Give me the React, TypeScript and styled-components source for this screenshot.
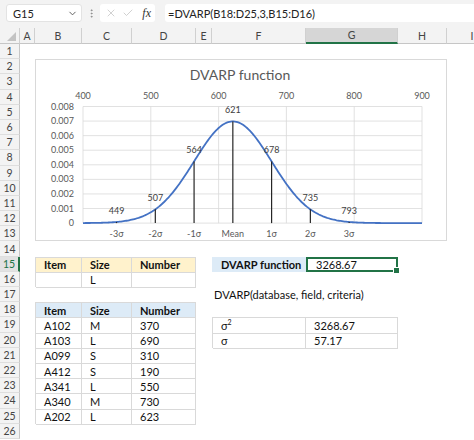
import React from "react";
import styled, { createGlobalStyle } from "styled-components";
import { ChevronDown, EllipsisVertical, X, Check } from "lucide-react";

const GlobalStyle = createGlobalStyle`
  html, body {
    margin: 0;
    padding: 0;
    background: #ffffff;
  }
  body {
    width: 474px;
    height: 440px;
    overflow: hidden;
    font-family: Lato, "Liberation Sans", sans-serif;
    color: #111111;
  }
`;

const ROW_H = 15.2;
const GRID_LINE = "#d9d9d9";

// Formula bar
const TopBar = styled.div`
  display: flex;
  align-items: flex-start;
  height: 28px;
  padding: 4px 0 0 6px;
  box-sizing: border-box;
  background: #f3f3f3;
`;

const NameBox = styled.div`
  display: flex;
  align-items: center;
  justify-content: space-between;
  width: 76px;
  height: 18px;
  box-sizing: border-box;
  padding: 0 3px 0 6px;
  background: #ffffff;
  border: 1px solid #e3e3e3;
  border-radius: 3px;
  font-size: 11px;
  color: #222222;
`;

const Dots = styled.div`
  display: flex;
  align-items: center;
  justify-content: center;
  width: 18px;
  height: 18px;
  color: #8a8a8a;
`;

const FxBox = styled.div`
  display: flex;
  align-items: center;
  gap: 5px;
  width: 55px;
  height: 18px;
  box-sizing: border-box;
  padding: 0 4px 0 5px;
  background: #ffffff;
  border-radius: 3px;
  color: #c2c2c2;
`;

const Fx = styled.span`
  margin-left: auto;
  font-family: "Liberation Serif", serif;
  font-style: italic;
  font-size: 12px;
  color: #333333;
`;

const FormulaInput = styled.div`
  display: flex;
  align-items: center;
  flex: 1;
  height: 18px;
  margin-left: 10px;
  padding-left: 3px;
  background: #ffffff;
  border-radius: 3px 0 0 3px;
  font-size: 11px;
  color: #222222;
`;

// Sheet grid
const Sheet = styled.div`
  display: grid;
  grid-template-columns: 20px 15px 47px 50px 64px 16px 94px 92px 49px 51px;
  grid-template-rows: 16px repeat(26, ${ROW_H}px);
  width: 474px;
  overflow: hidden;
`;

const Corner = styled.div`
  display: flex;
  align-items: flex-end;
  justify-content: flex-end;
  padding: 0 3px 2px 0;
  background: #f3f3f3;
  border-right: 1px solid #d0d0d0;
  border-bottom: 1px solid #c6c6c6;
`;

const ColHeader = styled.div<{ $active?: boolean }>`
  display: flex;
  align-items: center;
  justify-content: center;
  background: ${(p) => (p.$active ? "#d6d6d6" : "#f3f3f3")};
  border-right: 1px solid #d0d0d0;
  border-bottom: ${(p) => (p.$active ? "2px solid #217346" : "1px solid #c6c6c6")};
  font-size: 10.5px;
  color: #444444;
`;

const RowHeader = styled.div<{ $active?: boolean }>`
  display: flex;
  align-items: center;
  justify-content: center;
  box-sizing: border-box;
  background: ${(p) => (p.$active ? "#e2e2e2" : "#f3f3f3")};
  border-right: ${(p) => (p.$active ? "2px solid #217346" : "1px solid #c6c6c6")};
  border-bottom: 1px solid #dedede;
  font-size: 10.5px;
  color: ${(p) => (p.$active ? "#217346" : "#444444")};
`;

const ChartFrame = styled.div`
  grid-column: 3 / 10;
  grid-row: 3 / 15;
  border: 1px solid ${GRID_LINE};
  background: #ffffff;
  overflow: hidden;
`;

const Table = styled.div<{ $col: string; $row: string; $cols: string }>`
  grid-column: ${(p) => p.$col};
  grid-row: ${(p) => p.$row};
  display: grid;
  grid-template-columns: ${(p) => p.$cols};
  grid-auto-rows: ${ROW_H}px;
  border-top: 1px solid ${GRID_LINE};
  border-left: 1px solid ${GRID_LINE};
`;

const Cell = styled.div<{ $fill?: string; $bold?: boolean }>`
  display: flex;
  align-items: center;
  padding-left: 8px;
  background: ${(p) => p.$fill ?? "transparent"};
  border-right: 1px solid ${GRID_LINE};
  border-bottom: 1px solid ${GRID_LINE};
  font-size: 11px;
  font-weight: ${(p) => (p.$bold ? 700 : 400)};
  white-space: nowrap;
`;

const LabelCell = styled.div<{ $col: number; $row: number }>`
  grid-column: ${(p) => p.$col};
  grid-row: ${(p) => p.$row};
  display: flex;
  align-items: center;
  padding-left: 9px;
  background: #ddebf7;
  font-size: 11px;
  font-weight: 700;
`;

const ActiveCell = styled.div<{ $col: number; $row: number }>`
  grid-column: ${(p) => p.$col};
  grid-row: ${(p) => p.$row};
  position: relative;
  display: flex;
  align-items: center;
  padding-left: 8px;
  border: 2px solid #217346;
  font-size: 11px;
`;

const FillHandle = styled.span`
  position: absolute;
  right: -4px;
  bottom: -4px;
  width: 5px;
  height: 5px;
  background: #217346;
  border: 1px solid #ffffff;
`;

const Note = styled.div<{ $col: string; $row: number }>`
  grid-column: ${(p) => p.$col};
  grid-row: ${(p) => p.$row};
  display: flex;
  align-items: center;
  padding-left: 2px;
  font-size: 11px;
  white-space: nowrap;
`;

// Chart geometry (chart content box coordinates)
const MEAN = 621;
const SD = 57.17;
const px = (v: number) => 47 + (v - 400) * 0.678;
const py = (d: number) => 163.1 - d * 14575;
const pdf = (x: number) =>
  Math.exp(-((x - MEAN) ** 2) / (2 * SD * SD)) / (SD * Math.sqrt(2 * Math.PI));

const curve = (() => {
  const pts: string[] = [];
  for (let v = 400; v <= 900; v += 2) {
    pts.push(`${px(v).toFixed(2)},${py(pdf(v)).toFixed(2)}`);
  }
  return "M" + pts.join(" L");
})();

const sigmas = [
  { k: -3, label: "-3σ" },
  { k: -2, label: "-2σ" },
  { k: -1, label: "-1σ" },
  { k: 0, label: "Mean" },
  { k: 1, label: "1σ" },
  { k: 2, label: "2σ" },
  { k: 3, label: "3σ" },
];

const DvarpChart: React.FC = () => (
  <svg width="410" height="181" style={{ display: "block" }}>
    <g fontFamily="Lato, 'Liberation Sans', sans-serif" fill="#595959">
      <text x="204" y="20" fontSize="14" textAnchor="middle">
        DVARP function
      </text>
      {[400, 500, 600, 700, 800, 900].map((v) => (
        <text key={v} x={px(v)} y="39" fontSize="9" textAnchor="middle">
          {v}
        </text>
      ))}
      {[0, 1, 2, 3, 4, 5, 6, 7, 8].map((i) => (
        <text key={i} x="38" y={py(i / 1000) + 3} fontSize="9" textAnchor="end">
          {i === 0 ? "0" : (i / 1000).toFixed(3)}
        </text>
      ))}
    </g>
    <g stroke="#d9d9d9" strokeWidth="0.8">
      {[0, 1, 2, 3, 4, 5, 6, 7, 8].map((i) => (
        <line key={i} x1={px(400)} x2={px(900)} y1={py(i / 1000)} y2={py(i / 1000)} />
      ))}
      {[400, 500, 600, 700, 800, 900].map((v) => (
        <line key={v} x1={px(v)} x2={px(v)} y1={py(0.008)} y2={py(0)} />
      ))}
    </g>
    <path d={curve} fill="none" stroke="#4472c4" strokeWidth="1.8" />
    {sigmas.map(({ k, label }) => {
      const v = MEAN + k * SD;
      const x = px(v);
      const y = py(pdf(v));
      return (
        <g key={k} fontFamily="Lato, 'Liberation Sans', sans-serif" fontSize="9" fill="#404040">
          <line x1={x} x2={x} y1={y} y2={py(0)} stroke="#262626" strokeWidth="1.2" />
          <text x={x} y={y - 8} textAnchor="middle">
            {Math.round(v)}
          </text>
          <text x={x} y="177" textAnchor="middle" fill="#595959">
            {label}
          </text>
        </g>
      );
    })}
  </svg>
);

const columns = ["A", "B", "C", "D", "E", "F", "G", "H", "I"];

const database = [
  ["A102", "M", "370"],
  ["A103", "L", "690"],
  ["A099", "S", "310"],
  ["A412", "S", "190"],
  ["A341", "L", "550"],
  ["A340", "M", "730"],
  ["A202", "L", "623"],
];

const App: React.FC = () => {
  return (
    <>
      <GlobalStyle />
      <TopBar>
        <NameBox>
          <span>G15</span>
          <ChevronDown size={11} color="#555" />
        </NameBox>
        <Dots>
          <EllipsisVertical size={11} />
        </Dots>
        <FxBox>
          <X size={12} strokeWidth={1.5} />
          <Check size={12} strokeWidth={1.5} />
          <Fx>fx</Fx>
        </FxBox>
        <FormulaInput>=DVARP(B18:D25,3,B15:D16)</FormulaInput>
      </TopBar>

      <Sheet>
        <Corner>
          <svg width="9" height="9" viewBox="0 0 9 9">
            <path d="M9 0 L9 9 L0 9 Z" fill="#c3c3c3" />
          </svg>
        </Corner>
        {columns.map((c) => (
          <ColHeader key={c} $active={c === "G"}>
            {c}
          </ColHeader>
        ))}
        {Array.from({ length: 26 }, (_, i) => (
          <RowHeader key={i} $active={i + 1 === 15} style={{ gridColumn: 1, gridRow: i + 2 }}>
            {i + 1}
          </RowHeader>
        ))}

        <ChartFrame>
          <DvarpChart />
        </ChartFrame>

        <Table $col="3 / 6" $row="16 / 18" $cols="46px 50px 64px">
          <Cell $fill="#fff2cc" $bold>Item</Cell>
          <Cell $fill="#fff2cc" $bold>Size</Cell>
          <Cell $fill="#fff2cc" $bold>Number</Cell>
          <Cell />
          <Cell>L</Cell>
          <Cell />
        </Table>

        <Table $col="3 / 6" $row="19 / 27" $cols="46px 50px 64px">
          <Cell $fill="#ddebf7" $bold>Item</Cell>
          <Cell $fill="#ddebf7" $bold>Size</Cell>
          <Cell $fill="#ddebf7" $bold>Number</Cell>
          {database.map((row) =>
            row.map((v, j) => <Cell key={row[0] + j}>{v}</Cell>)
          )}
        </Table>

        <LabelCell $col={7} $row={16}>DVARP function</LabelCell>
        <ActiveCell $col={8} $row={16}>
          3268.67
          <FillHandle />
        </ActiveCell>

        <Note $col="7 / 11" $row={18}>DVARP(database, field, criteria)</Note>

        <Table $col="7 / 9" $row="20 / 22" $cols="93px 92px">
          <Cell>
            σ<sup style={{ fontSize: "7px", alignSelf: "flex-start" }}>2</sup>
          </Cell>
          <Cell>3268.67</Cell>
          <Cell>σ</Cell>
          <Cell>57.17</Cell>
        </Table>
      </Sheet>
    </>
  );
};

export default App;
